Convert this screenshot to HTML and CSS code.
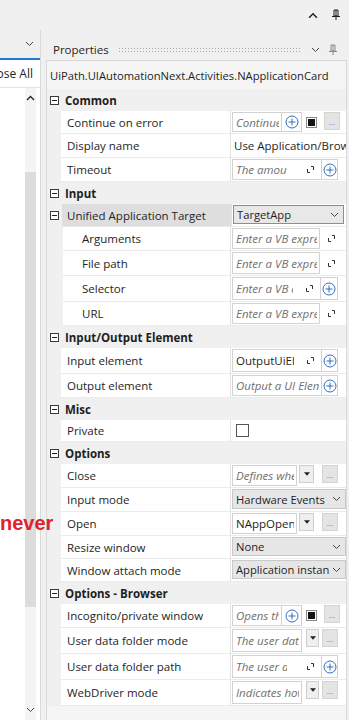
FILE: index.html
```html
<!DOCTYPE html>
<html lang="en">
<head>
    <meta charset="UTF-8">
    <meta name="viewport" content="width=device-width, initial-scale=1.0">
    <title>Properties</title>
    <link rel="stylesheet" href="styles.css">
</head>
<body>
    <svg class="defs" width="0" height="0">
        <symbol id="i-plus" viewBox="0 0 14 14"><circle cx="7" cy="7" r="6" fill="none" stroke="#2f6cc0"/><path d="M7 3.5v7M3.5 7h7" stroke="#2f6cc0"/></symbol>
        <symbol id="i-expand" viewBox="0 0 9 9"><path d="M1.5 4v3.5H4M5 1.5h2.5V5" fill="none" stroke="#333"/></symbol>
        <symbol id="i-chev" viewBox="0 0 9 6"><path d="M1 1l3.5 3.5L8 1" fill="none" stroke="#444"/></symbol>
        <symbol id="i-chevup" viewBox="0 0 9 6"><path d="M1 5l3.5-3.5L8 5" fill="none" stroke="#222" stroke-width="1.3"/></symbol>
        <symbol id="i-tri" viewBox="0 0 7 4"><path d="M0 0h7L3.5 4z" fill="#222"/></symbol>
        <symbol id="i-pin" viewBox="0 0 10 12"><path d="M3 1h4v6H3zM5 1v6" fill="none" stroke="currentColor"/><path d="M1 7.5h8M5 7.5V11" fill="none" stroke="currentColor"/></symbol>
    </svg>

    <div class="topbar">
        <svg class="ic-up"><use href="#i-chevup"/></svg>
        <svg class="ic-pin dark"><use href="#i-pin"/></svg>
    </div>

    <div class="main">
        <div class="side">
            <div class="side-head"><svg class="ic-chev"><use href="#i-chev"/></svg></div>
            <div class="side-tab"><span>Close All</span></div>
            <div class="side-body">
                <div class="side-list"></div>
                <div class="scroll">
                    <div class="sbtn"><svg class="ic-chev"><use href="#i-chevup"/></svg></div>
                    <div class="track"><div class="thumb"></div></div>
                    <div class="sbtn"><svg class="ic-chev"><use href="#i-chev"/></svg></div>
                </div>
            </div>
        </div>

        <div class="props">
            <div class="props-head">
                <span class="props-title">Properties</span>
                <span class="grip"></span>
                <svg class="ic-chev"><use href="#i-chev"/></svg>
                <svg class="ic-pin"><use href="#i-pin"/></svg>
            </div>
            <div class="props-body">
                <div class="type-name">UiPath.UIAutomationNext.Activities.NApplicationCard</div>
                <div class="grid">

                    <div class="cat"><span class="exp"></span>Common</div>
                    <div class="prop h23">
                        <span class="gut"></span>
                        <div class="pname">Continue on error</div>
                        <div class="pval">
                            <div class="tb w50"><span class="ph">Continue on error</span></div>
                            <div class="pbtn w20"><svg class="ic-plus"><use href="#i-plus"/></svg></div>
                            <span class="sq"></span>
                            <span class="dots">...</span>
                        </div>
                    </div>
                    <div class="prop">
                        <span class="gut"></span>
                        <div class="pname">Display name</div>
                        <div class="pval plain">Use Application/Browser</div>
                    </div>
                    <div class="prop">
                        <span class="gut"></span>
                        <div class="pname">Timeout</div>
                        <div class="pval">
                            <div class="tb w90"><span class="ph">The amount of time</span><svg class="ic-exp"><use href="#i-expand"/></svg></div>
                            <div class="pbtn w16"><svg class="ic-plus"><use href="#i-plus"/></svg></div>
                        </div>
                    </div>

                    <div class="cat"><span class="exp"></span>Input</div>
                    <div class="prop h23">
                        <span class="gut"><span class="exp"></span></span>
                        <div class="pname sel">Unified Application Target</div>
                        <div class="pval">
                            <div class="dd target">TargetApp<svg class="ic-chev"><use href="#i-chev"/></svg></div>
                        </div>
                    </div>
                    <div class="prop sub">
                        <span class="gut"></span>
                        <div class="pname">Arguments</div>
                        <div class="pval">
                            <div class="tb w88"><span class="ph">Enter a VB expression</span></div>
                            <svg class="ic-exp out"><use href="#i-expand"/></svg>
                        </div>
                    </div>
                    <div class="prop sub h25">
                        <span class="gut"></span>
                        <div class="pname">File path</div>
                        <div class="pval">
                            <div class="tb w88"><span class="ph">Enter a VB expression</span></div>
                            <svg class="ic-exp out"><use href="#i-expand"/></svg>
                        </div>
                    </div>
                    <div class="prop sub h26">
                        <span class="gut"></span>
                        <div class="pname">Selector</div>
                        <div class="pval">
                            <div class="tb w89"><span class="ph">Enter a VB expression</span><svg class="ic-exp near"><use href="#i-expand"/></svg></div>
                            <div class="pbtn w17"><svg class="ic-plus"><use href="#i-plus"/></svg></div>
                        </div>
                    </div>
                    <div class="prop sub">
                        <span class="gut"></span>
                        <div class="pname">URL</div>
                        <div class="pval">
                            <div class="tb w88"><span class="ph">Enter a VB expression</span></div>
                            <svg class="ic-exp out"><use href="#i-expand"/></svg>
                        </div>
                    </div>

                    <div class="cat"><span class="exp"></span>Input/Output Element</div>
                    <div class="prop h26">
                        <span class="gut"></span>
                        <div class="pname">Input element</div>
                        <div class="pval">
                            <div class="tb w90"><span class="txt">OutputUiElement</span><svg class="ic-exp near"><use href="#i-expand"/></svg></div>
                            <div class="pbtn w16"><svg class="ic-plus"><use href="#i-plus"/></svg></div>
                        </div>
                    </div>
                    <div class="prop">
                        <span class="gut"></span>
                        <div class="pname">Output element</div>
                        <div class="pval">
                            <div class="tb w90"><span class="ph">Output a UI Element</span></div>
                            <div class="pbtn w16"><svg class="ic-plus"><use href="#i-plus"/></svg></div>
                        </div>
                    </div>

                    <div class="cat"><span class="exp"></span>Misc</div>
                    <div class="prop h22">
                        <span class="gut"></span>
                        <div class="pname">Private</div>
                        <div class="pval"><span class="check"></span></div>
                    </div>

                    <div class="cat"><span class="exp"></span>Options</div>
                    <div class="prop">
                        <span class="gut"></span>
                        <div class="pname">Close</div>
                        <div class="pval">
                            <div class="tb w65"><span class="ph">Defines when to close</span></div>
                            <span class="drop"><svg class="ic-tri"><use href="#i-tri"/></svg></span>
                            <span class="dots">...</span>
                        </div>
                    </div>
                    <div class="prop">
                        <span class="gut"></span>
                        <div class="pname">Input mode</div>
                        <div class="pval">
                            <div class="dd">Hardware Events<svg class="ic-chev"><use href="#i-chev"/></svg></div>
                        </div>
                    </div>
                    <div class="prop">
                        <span class="gut"></span>
                        <div class="pname">Open</div>
                        <div class="pval">
                            <div class="tb w65"><span class="txt">NAppOpenMode</span></div>
                            <span class="drop"><svg class="ic-tri"><use href="#i-tri"/></svg></span>
                            <span class="dots">...</span>
                        </div>
                    </div>
                    <div class="prop h23">
                        <span class="gut"></span>
                        <div class="pname">Resize window</div>
                        <div class="pval">
                            <div class="dd">None<svg class="ic-chev"><use href="#i-chev"/></svg></div>
                        </div>
                    </div>
                    <div class="prop h23">
                        <span class="gut"></span>
                        <div class="pname">Window attach mode</div>
                        <div class="pval">
                            <div class="dd"><span class="clip">Application instance</span><svg class="ic-chev"><use href="#i-chev"/></svg></div>
                        </div>
                    </div>

                    <div class="cat"><span class="exp"></span>Options - Browser</div>
                    <div class="prop">
                        <span class="gut"></span>
                        <div class="pname">Incognito/private window</div>
                        <div class="pval">
                            <div class="tb w50"><span class="ph">Opens the browser</span></div>
                            <div class="pbtn w20"><svg class="ic-plus"><use href="#i-plus"/></svg></div>
                            <span class="sq"></span>
                            <span class="dots">...</span>
                        </div>
                    </div>
                    <div class="prop h26">
                        <span class="gut"></span>
                        <div class="pname">User data folder mode</div>
                        <div class="pval">
                            <div class="tb w70"><span class="ph">The user data folder</span></div>
                            <span class="drop wide"><svg class="ic-tri"><use href="#i-tri"/></svg></span>
                            <span class="dots">...</span>
                        </div>
                    </div>
                    <div class="prop h26">
                        <span class="gut"></span>
                        <div class="pname">User data folder path</div>
                        <div class="pval">
                            <div class="tb w90"><span class="ph">The user data folder</span><svg class="ic-exp"><use href="#i-expand"/></svg></div>
                            <div class="pbtn w16"><svg class="ic-plus"><use href="#i-plus"/></svg></div>
                        </div>
                    </div>
                    <div class="prop h26">
                        <span class="gut"></span>
                        <div class="pname">WebDriver mode</div>
                        <div class="pval">
                            <div class="tb w70"><span class="ph">Indicates how the</span></div>
                            <span class="drop wide"><svg class="ic-tri"><use href="#i-tri"/></svg></span>
                            <span class="dots">...</span>
                        </div>
                    </div>

                </div>
            </div>
        </div>
    </div>

    <div class="note">never</div>
</body>
</html>
```

FILE: styles.css
```css
* {
    margin: 0;
    padding: 0;
    box-sizing: border-box;
}

body {
    position: relative;
    width: 349px;
    height: 720px;
    overflow: hidden;
    background: #f0f0f0;
    font-family: 'Open Sans', sans-serif;
    font-size: 11.5px;
    color: #1e1e1e;
}

.defs {
    position: absolute;
}

svg {
    display: block;
    flex-shrink: 0;
}

/* top strip */
.topbar {
    height: 30px;
    display: flex;
    justify-content: flex-end;
    align-items: center;
    gap: 13px;
    padding-right: 8px;
}

.ic-up {
    width: 10px;
    height: 7px;
}

.ic-pin {
    width: 10px;
    height: 12px;
    color: #8a8a8a;
}

.ic-pin.dark {
    color: #1e1e1e;
}

.ic-chev {
    width: 9px;
    height: 6px;
}

.main {
    display: flex;
    gap: 5px;
    height: 690px;
}

/* left panel */
.side {
    width: 41px;
    display: flex;
    flex-direction: column;
    background: #fff;
    border-right: 1px solid #d9d9d9;
}

.side-head {
    height: 30px;
    display: flex;
    align-items: center;
    justify-content: flex-end;
    padding-right: 6px;
    background: #f0f0f0;
    border-bottom: 2px solid #1f7ad1;
}

.side-head .ic-chev path {
    stroke: #999;
}

.side-tab {
    height: 28px;
    display: flex;
    justify-content: flex-end;
    align-items: center;
    padding-right: 7px;
    overflow: hidden;
    white-space: nowrap;
    font-size: 12px;
    border-bottom: 1px solid #e3e3e3;
}

.side-body {
    flex: 1;
    display: flex;
}

.side-list {
    width: 25px;
}

.scroll {
    width: 11px;
    display: flex;
    flex-direction: column;
    background: #f4f4f4;
}

.sbtn {
    height: 20px;
    display: flex;
    align-items: center;
    justify-content: center;
}

.sbtn path {
    stroke: #888;
    stroke-width: 1;
}

.track {
    flex: 1;
}

.thumb {
    margin-top: 64px;
    height: 435px;
    background: #dcdcdc;
}

/* properties panel */
.props {
    width: 301px;
    margin-top: 9px;
    display: flex;
    flex-direction: column;
}

.props-head {
    height: 21px;
    display: flex;
    align-items: center;
    padding-left: 7px;
    padding-right: 9px;
}

.grip {
    flex: 1;
    height: 6px;
    margin: 0 9px;
    background: radial-gradient(circle, #a8a8a8 0.6px, transparent 0.9px) 0 0 / 3px 3px;
}

.props-head .ic-chev {
    margin-right: 8px;
}

.props-head .ic-chev path {
    stroke: #999;
}

.props-body {
    flex: 1;
    border: 1px solid #d9d9d9;
    border-bottom: none;
    background: #f5f5f5;
}

.type-name {
    height: 28px;
    display: flex;
    align-items: center;
    padding-left: 3px;
    font-size: 11.2px;
    white-space: nowrap;
    overflow: hidden;
}

.grid {
    background: #f0f0f0;
}

.cat {
    height: 22px;
    display: flex;
    align-items: center;
    gap: 6px;
    padding-left: 3px;
    font-weight: 700;
}

.exp {
    width: 9px;
    height: 9px;
    border: 1px solid #3a3a3a;
    display: flex;
    align-items: center;
    justify-content: center;
    background: #fff;
}

.exp::after {
    content: '';
    width: 5px;
    height: 1px;
    background: #222;
}

.prop {
    height: 24px;
    display: flex;
}

.h22 { height: 22px; }
.h23 { height: 23px; }
.h25 { height: 25px; }
.h26 { height: 26px; }

.gut {
    width: 14px;
    display: flex;
    align-items: center;
    padding-left: 3px;
}

.pname {
    width: 169px;
    display: flex;
    align-items: center;
    padding-left: 6px;
    background: #fff;
    border-bottom: 1px solid #ebebeb;
    white-space: nowrap;
    overflow: hidden;
}

.pname.sel {
    background: #dedede;
    margin-left: 1px;
    padding-left: 5px;
}

.sub .pname {
    padding-left: 19px;
    margin-left: 2px;
    width: 167px;
}

.pval {
    flex: 1;
    display: flex;
    align-items: stretch;
    padding: 1px 0 1px 1px;
    background: #fff;
    border-left: 1px solid #e2e2e2;
    border-bottom: 1px solid #ebebeb;
    overflow: hidden;
}

.pval.plain {
    align-items: center;
    padding-left: 3px;
    white-space: nowrap;
}

/* editors */
.tb {
    display: flex;
    align-items: center;
    border: 1px solid #d2d2d2;
    padding: 0 2px 0 3px;
    white-space: nowrap;
    overflow: hidden;
    background: #fff;
}

.w50 { width: 50px; }
.w65 { width: 65px; }
.w70 { width: 70px; }
.w88 { width: 88px; }
.w89 { width: 89px; }
.w90 { width: 90px; }

.ph,
.txt {
    flex: 1;
    overflow: hidden;
}

.ph {
    font-style: italic;
    color: #6f6f6f;
}

.ic-exp {
    width: 9px;
    height: 9px;
    margin: 0 4px 0 19px;
}

.ic-exp.near {
    margin-left: 12px;
}

.ic-exp.out {
    align-self: center;
    margin: 0 0 0 7px;
}

.pbtn {
    display: flex;
    align-items: center;
    justify-content: center;
    border: 1px solid #d2d2d2;
    border-left: none;
}

.w16 { width: 16px; }
.w17 { width: 17px; }
.w20 { width: 20px; }

.ic-plus {
    width: 14px;
    height: 14px;
}

.sq {
    align-self: center;
    width: 11px;
    height: 11px;
    margin-left: 4px;
    padding: 1px;
    border: 1px solid #8a8a8a;
    background: #151515;
    background-clip: content-box;
}

.dots {
    align-self: flex-start;
    width: 16px;
    height: 18px;
    margin-left: 7px;
    background: #e4e4e4;
    border: 1px solid #d4d4d4;
    color: #777;
    font-size: 8px;
    line-height: 8px;
    display: flex;
    align-items: flex-end;
    justify-content: center;
    padding-bottom: 3px;
    overflow: hidden;
}

.drop {
    align-self: flex-start;
    width: 15px;
    height: 18px;
    margin-left: 2px;
    background: #efefef;
    border: 1px solid #cfcfcf;
    display: flex;
    align-items: center;
    justify-content: center;
}

.drop.wide {
    width: 13px;
    margin-left: 4px;
}

.drop + .dots {
    margin-left: 8px;
}

.drop.wide + .dots {
    margin-left: 3px;
}

.ic-tri {
    width: 6px;
    height: 4px;
}

.dd {
    flex: 1;
    display: flex;
    align-items: center;
    justify-content: space-between;
    gap: 3px;
    margin: 0 0 1px;
    padding: 0 4px 0 3px;
    background: #e6e6e6;
    border: 1px solid #c9c9c9;
    white-space: nowrap;
    overflow: hidden;
    font-size: 11.2px;
}

.dd.target {
    flex: none;
    width: 111px;
    border-color: #8e8e8e;
    background: #e8e8e8;
}

.clip {
    overflow: hidden;
    flex: 1;
}

.check {
    align-self: center;
    width: 13px;
    height: 13px;
    margin-left: 4px;
    border: 1px solid #555;
    background: #fff;
}

/* annotation over the left panel */
.note {
    position: absolute;
    left: 0;
    top: 511px;
    font-family: 'Liberation Sans', sans-serif;
    font-size: 20px;
    font-weight: 700;
    line-height: 24px;
    color: #e1222b;
}
```
